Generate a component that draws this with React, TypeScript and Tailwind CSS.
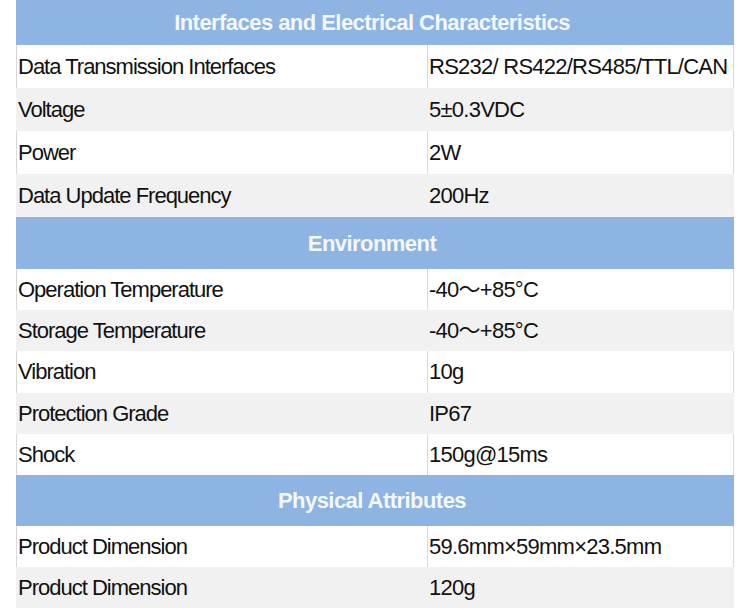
type Row = { label: string; value: string };
type Section = { title: string; titleH: string; rowH: string; rows: Row[] };

const sections: Section[] = [
  {
    title: 'Interfaces and Electrical Characteristics',
    titleH: 'h-[45px]',
    rowH: 'h-[43px]',
    rows: [
      { label: 'Data Transmission Interfaces', value: 'RS232/ RS422/RS485/TTL/CAN' },
      { label: 'Voltage', value: '5±0.3VDC' },
      { label: 'Power', value: '2W' },
      { label: 'Data Update Frequency', value: '200Hz' },
    ],
  },
  {
    title: 'Environment',
    titleH: 'h-[52px]',
    rowH: 'h-[41.2px]',
    rows: [
      { label: 'Operation Temperature', value: '-40～+85°C' },
      { label: 'Storage Temperature', value: '-40～+85°C' },
      { label: 'Vibration', value: '10g' },
      { label: 'Protection Grade', value: 'IP67' },
      { label: 'Shock', value: '150g@15ms' },
    ],
  },
  {
    title: 'Physical Attributes',
    titleH: 'h-[51px]',
    rowH: 'h-[41px]',
    rows: [
      { label: 'Product Dimension', value: '59.6mm×59mm×23.5mm' },
      { label: 'Product Dimension', value: '120g' },
    ],
  },
];

export default function App() {
  return (
    <div className="w-[750px] h-[611px] bg-white px-4 font-['Liberation_Sans','Noto_Sans_CJK_SC',Arial,sans-serif] text-[#111]">
      <div className="w-[718px]">
        {sections.map((s) => (
          <div key={s.title}>
            <div
              className={`${s.titleH} flex items-center justify-center pr-[6px] bg-[#8db4e2] text-[#f4f8fd] font-bold text-[22px] tracking-[-0.55px]`}
            >
              {s.title}
            </div>
            {s.rows.map((r, i) => {
              const white = i % 2 === 0;
              return (
                <div
                  key={i}
                  className={`${s.rowH} flex text-[22px] ${
                    white ? 'bg-white border-x border-[#d8d8d8]' : 'bg-[#f1f1f1] border-x border-[#f1f1f1]'
                  }`}
                >
                  <div
                    className={`w-[411px] flex items-center pl-[1px] tracking-[-1px] ${
                      white ? 'border-r border-[#d8d8d8]' : 'border-r border-[#f1f1f1]'
                    }`}
                  >
                    {r.label}
                  </div>
                  <div className="flex-1 flex items-center pl-[1px] tracking-[-0.75px]">{r.value}</div>
                </div>
              );
            })}
          </div>
        ))}
      </div>
    </div>
  );
}
